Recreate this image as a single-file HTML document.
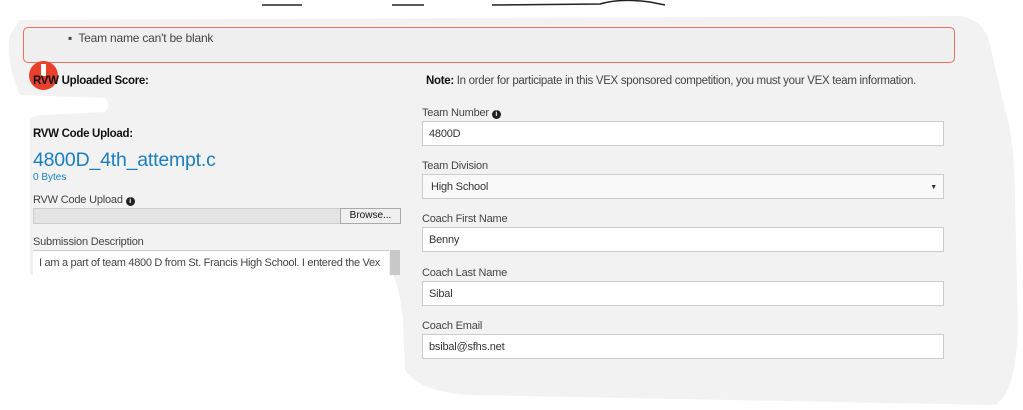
<!DOCTYPE html>
<html><head><style>
body{margin:0;width:1023px;height:410px;background:#fff;position:relative;overflow:hidden;font-family:"Liberation Sans",sans-serif;color:#333}
.a{position:absolute}
.lbl{font-size:11px;color:#444;letter-spacing:-0.2px}
.inp{position:absolute;left:422px;height:25px;background:#fff;border:1px solid #ccc;font-size:11px;line-height:25px;padding-left:6px;box-sizing:border-box;width:522px;letter-spacing:-0.2px}
.info{display:inline-block;width:9px;height:9px;border-radius:50%;background:#222;color:#fff;font-size:7px;line-height:9px;text-align:center;font-weight:bold;vertical-align:0}
</style></head><body>
<svg class="a" style="left:0;top:0" width="1023" height="410">
<path d="M20 20 L960 16 Q985 20 990 45 L1005 110 Q1015 140 1015 200 L1018 330 Q1015 395 995 405 L470 395 Q420 392 405 370 L403 320 Q400 290 393 275 L30 275 L30 122 Q30 115 45 115 L105 112 Q112 105 105 98 L20 95 Q5 60 10 35 Z" fill="#f2f2f2"/>
<path d="M262 5 L302 5 M392 5 L424 5 M492 5 L600 4 Q620 -2 650 2 L665 5" stroke="#222" stroke-width="1.5" fill="none"/>
</svg>
<div class="a" style="left:23px;top:27px;width:930px;height:34px;border:1px solid #e8705e;border-radius:5px;background:#efefef"></div>
<div class="a" style="left:68px;top:31px;font-size:12px;color:#444;letter-spacing:-0.2px">▪&nbsp;&nbsp;Team name can't be blank</div>
<div class="a" style="left:29px;top:61px;width:29px;height:29px;border-radius:50%;background:#e8402a"></div>
<div class="a" style="left:41px;top:64px;width:5px;height:12px;background:#fff"></div>
<div class="a" style="left:33px;top:75px;font-size:11.5px;font-weight:bold;color:#111;letter-spacing:-0.3px">RVW Uploaded Score:</div>
<div class="a" style="left:33px;top:128px;font-size:11.5px;font-weight:bold;color:#111;letter-spacing:-0.3px">RVW Code Upload:</div>
<div class="a" style="left:33px;top:149px;font-size:19.5px;color:#1a7fbf;letter-spacing:-0.2px">4800D_4th_attempt.c</div>
<div class="a" style="left:33px;top:172px;font-size:10px;color:#1a7fbf">0 Bytes</div>
<div class="a lbl" style="left:33px;top:194px">RVW Code Upload <span class="info">i</span></div>
<div class="a" style="left:33px;top:208px;width:307px;height:14px;background:#e4e4e4;border:1px solid #ccc"></div>
<div class="a" style="left:340px;top:208px;width:59px;height:14px;background:#efefef;border:1px solid #aaa;font-size:10px;text-align:center;line-height:14px;color:#111">Browse...</div>
<div class="a lbl" style="left:33px;top:236px">Submission Description</div>
<div class="a" style="left:33px;top:250px;width:356px;height:25px;background:#fff;border-top:1px solid #ccc;font-size:11px;color:#444;padding-left:6px;padding-top:6px;box-sizing:border-box;overflow:hidden;white-space:nowrap;letter-spacing:-0.3px">I am a part of team 4800 D from St. Francis High School. I entered the Vex</div>
<div class="a" style="left:390px;top:250px;width:10px;height:25px;background:#c8c8c8"></div>
<div class="a" style="left:426px;top:75px;font-size:11.5px;color:#444;letter-spacing:-0.3px"><b style="color:#111">Note:</b> In order for participate in this VEX sponsored competition, you must your VEX team information.</div>
<div class="a lbl" style="left:422px;top:107px">Team Number <span class="info">i</span></div>
<div class="inp" style="top:121px">4800D</div>
<div class="a lbl" style="left:422px;top:160px">Team Division</div>
<div class="inp" style="top:174px;background:#f9f9f9;padding-left:8px">High School<span style="position:absolute;right:6px;font-size:7px">▼</span></div>
<div class="a lbl" style="left:422px;top:213px">Coach First Name</div>
<div class="inp" style="top:227px">Benny</div>
<div class="a lbl" style="left:422px;top:267px">Coach Last Name</div>
<div class="inp" style="top:281px">Sibal</div>
<div class="a lbl" style="left:422px;top:320px">Coach Email</div>
<div class="inp" style="top:334px">bsibal@sfhs.net</div>
</body></html>
